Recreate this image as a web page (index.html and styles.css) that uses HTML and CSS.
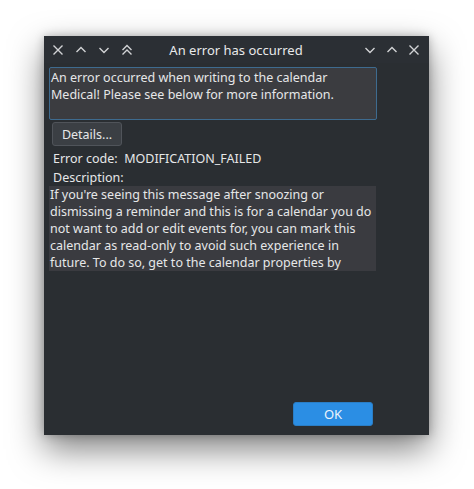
FILE: index.html
```html
<!DOCTYPE html>
<html>
<head>
<meta charset="utf-8">
<link rel="stylesheet" href="styles.css">
</head>
<body>
<div class="window">
  <div class="titlebar">
    <div class="tb-group">
      <span class="tb-btn"><svg width="12" height="12" viewBox="0 0 12 12"><path d="M1.5 1.5 L10.5 10.5 M10.5 1.5 L1.5 10.5"/></svg></span>
      <span class="tb-btn"><svg width="12" height="12" viewBox="0 0 12 12"><path d="M1.5 8 L6 3.5 L10.5 8"/></svg></span>
      <span class="tb-btn"><svg width="12" height="12" viewBox="0 0 12 12"><path d="M1.5 4 L6 8.5 L10.5 4"/></svg></span>
      <span class="tb-btn"><svg width="12" height="12" viewBox="0 0 12 12"><path d="M1.5 6 L6 1.5 L10.5 6 M1.5 10.5 L6 6 L10.5 10.5"/></svg></span>
    </div>
    <div class="title">An error has occurred</div>
    <div class="tb-group right">
      <span class="tb-btn"><svg width="12" height="12" viewBox="0 0 12 12"><path d="M1.5 4 L6 8.5 L10.5 4"/></svg></span>
      <span class="tb-btn"><svg width="12" height="12" viewBox="0 0 12 12"><path d="M1.5 8 L6 3.5 L10.5 8"/></svg></span>
      <span class="tb-btn"><svg width="12" height="12" viewBox="0 0 12 12"><path d="M1.5 1.5 L10.5 10.5 M10.5 1.5 L1.5 10.5"/></svg></span>
    </div>
  </div>
  <div class="content">
    <div class="message">An error occurred when writing to the calendar Medical! Please see below for more information.</div>
    <button class="btn details">Details...</button>
    <div class="label first">Error code:&nbsp; MODIFICATION_FAILED</div>
    <div class="label">Description:</div>
    <div class="desc">If you're seeing this message after snoozing or<br>dismissing a reminder and this is for a calendar you do<br>not want to add or edit events for, you can mark this<br>calendar as read-only to avoid such experience in<br>future. To do so, get to the calendar properties by</div>
    <div class="spacer"></div>
    <div class="footer"><button class="btn ok">OK</button></div>
  </div>
</div>
</body>
</html>
```
FILE: styles.css
```css
html, body {
  margin: 0;
  padding: 0;
  background: #ffffff;
}
body {
  box-sizing: border-box;
  min-height: 489px;
  padding: 36px 0 0 44px;
  font-family: "Noto Sans", "DejaVu Sans", sans-serif;
}
.window {
  width: 385px;
  height: 399px;
  background: #2a2e32;
  border-radius: 3px 3px 0 0;
  box-shadow: 0 14px 34px rgba(0, 0, 0, 0.5), 0 0 10px rgba(0, 0, 0, 0.25);
  display: flex;
  flex-direction: column;
  color: #e6e7e8;
}
.titlebar {
  height: 27px;
  display: flex;
  align-items: center;
  justify-content: space-between;
  background: #2b2f34;
  padding: 0 9px 0 8px;
}
.tb-group {
  display: flex;
  gap: 11px;
  width: 81px;
}
.tb-group.right {
  justify-content: flex-end;
  gap: 10px;
}
.tb-btn {
  width: 12px;
  height: 12px;
  display: flex;
}
.tb-btn svg path {
  fill: none;
  stroke: #d2d3d5;
  stroke-width: 1.4;
}
.title {
  font-size: 13px;
  color: #e8e9ea;
}
.content {
  flex: 1;
  display: flex;
  flex-direction: column;
  padding: 4px 52px 9px 5px;
}
.message {
  height: 50px;
  border: 1px solid #3e6b8f;
  border-radius: 2px;
  background: #3b3c40;
  font-size: 12.5px;
  line-height: 17px;
  padding: 1px 2px 0 1px;
  width: 323px;
}
.btn {
  font-family: "Noto Sans", "DejaVu Sans", sans-serif;
  font-size: 12.5px;
  color: #e6e7e8;
  border-radius: 3px;
  cursor: default;
}
.details {
  align-self: flex-start;
  margin: 2px 0 0 3px;
  width: 70px;
  height: 24px;
  padding: 0;
  background: #3b3f44;
  border: 1px solid #50545a;
}
.label {
  font-size: 12.5px;
  line-height: 17px;
  padding-left: 4px;
}
.label.first {
  margin-top: 4px;
  margin-bottom: 2px;
}
.desc {
  margin-top: 0;
  height: 85px;
  background: #3a3b40;
  font-size: 12.5px;
  line-height: 17px;
  padding: 0 0 0 1px;
  width: 326px;
  white-space: nowrap;
}
.spacer {
  flex: 1;
}
.footer {
  display: flex;
  justify-content: flex-end;
  padding-right: 4px;
}
.ok {
  width: 80px;
  height: 24px;
  padding: 0;
  font-size: 13px;
  background: #2b8ee4;
  border: 1px solid #2a7ec6;
  color: #eaf4fc;
}
```
